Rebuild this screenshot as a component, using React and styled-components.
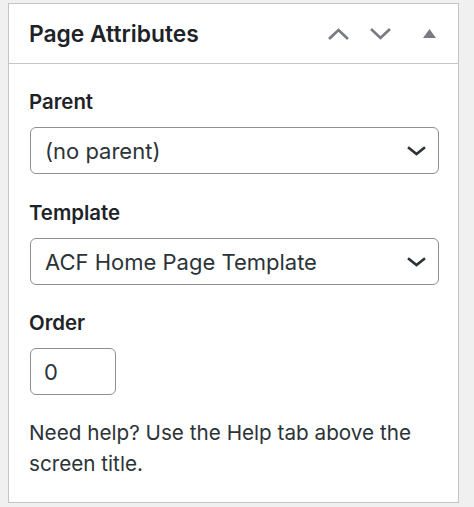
import React from "react";
import styled, { createGlobalStyle } from "styled-components";

const Global = createGlobalStyle`
  html, body { margin: 0; padding: 0; background: #f0f0f1; }
  body { font-family: Inter, "Noto Sans", "Liberation Sans", sans-serif; -webkit-font-smoothing: antialiased; }
  * { box-sizing: border-box; }
`;

const Page = styled.div`
  padding: 3px 15px 0 8px;
  width: 474px;
  height: 507px;
  background: #f0f0f1;
`;

const Postbox = styled.div`
  background: #fff;
  border: 1.5px solid #c3c4c7;
  width: 451px;
  height: 500px;
  display: flex;
  flex-direction: column;
`;

const Header = styled.div`
  display: flex;
  align-items: center;
  justify-content: space-between;
  height: 60px;
  border-bottom: 1.5px solid #c3c4c7;
  padding-left: 20px;
`;

const Title = styled.h2`
  margin: 0;
  font-size: 22.8px;
  line-height: 28px;
  font-weight: 600;
  color: #1d2327;
`;

const Actions = styled.div`
  display: flex;
  align-items: center;
  height: 100%;
`;

const IconButton = styled.button`
  display: flex;
  align-items: center;
  justify-content: center;
  width: ${(p) => p.$w}px;
  height: 100%;
  padding: 0;
  border: 0;
  background: transparent;
  color: #787c82;
`;

const Inside = styled.div`
  padding: 0 20px;
  display: flex;
  flex-direction: column;
`;

const Label = styled.p`
  margin: ${(p) => p.$top}px 0 13px;
  font-size: 20.4px;
  line-height: 24px;
  font-weight: 600;
  color: #1d2327;
`;

const SelectBox = styled.div`
  display: flex;
  align-items: center;
  justify-content: space-between;
  width: 409px;
  height: 47px;
  margin-left: 1px;
  border: 1.5px solid #8c8f94;
  border-radius: 6px;
  padding: 0 12px 0 14px;
  font-size: 22px;
  color: #2c3338;
  background: #fff;
`;

const OrderInput = styled.div`
  display: flex;
  align-items: center;
  width: 86px;
  height: 47px;
  margin-left: 1px;
  border: 1.5px solid #8c8f94;
  border-radius: 6px;
  padding: 0 13px;
  font-size: 22px;
  color: #2c3338;
  background: #fff;
`;

const HelpText = styled.p`
  margin: 22px 0 0;
  font-size: 20.7px;
  line-height: 31px;
  color: #2c3338;
`;

const Chevron = ({ up, color = "currentColor", w = 21, h = 12, sw = 3 }) => (
  <svg width={w} height={h} viewBox={`0 0 ${w} ${h}`} fill="none">
    <path
      d={up ? `M2 ${h - 2} L${w / 2} 2 L${w - 2} ${h - 2}` : `M2 2 L${w / 2} ${h - 2} L${w - 2} 2`}
      stroke={color}
      strokeWidth={sw}
      strokeLinecap="square"
      strokeLinejoin="miter"
    />
  </svg>
);

const Triangle = () => (
  <svg width="13" height="9" viewBox="0 0 13 9">
    <path d="M6.5 0 L13 9 L0 9 Z" fill="#787c82" />
  </svg>
);

const Select = ({ value }) => (
  <SelectBox>
    <span>{value}</span>
    <Chevron w={19} h={10} sw={2.6} color="#2c3338" />
  </SelectBox>
);

export default function App() {
  return (
    <>
      <Global />
      <Page>
        <Postbox>
          <Header>
            <Title>Page Attributes</Title>
            <Actions>
              <IconButton $w={41} aria-label="Move up">
                <Chevron up sw={2.7} />
              </IconButton>
              <IconButton $w={42} aria-label="Move down">
                <Chevron sw={2.7} />
              </IconButton>
              <IconButton $w={57} aria-label="Toggle panel">
                <Triangle />
              </IconButton>
            </Actions>
          </Header>
          <Inside>
            <Label $top={26}>Parent</Label>
            <Select value="(no parent)" />
            <Label $top={27}>Template</Label>
            <Select value="ACF Home Page Template" />
            <Label $top={26}>Order</Label>
            <OrderInput>0</OrderInput>
            <HelpText>
              Need help? Use the Help tab above the
              <br />
              screen title.
            </HelpText>
          </Inside>
        </Postbox>
      </Page>
    </>
  );
}
